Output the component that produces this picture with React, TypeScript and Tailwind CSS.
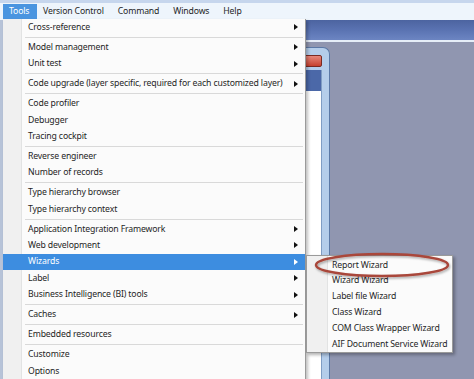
import React from "react";

const F = { fontFamily: '"Noto Sans", "Open Sans", sans-serif' };

type Item = { t: string; arrow?: boolean; hl?: boolean } | "sep";

const items: Item[] = [
  { t: "Cross-reference", arrow: true },
  "sep",
  { t: "Model management", arrow: true },
  { t: "Unit test", arrow: true },
  "sep",
  { t: "Code upgrade (layer specific, required for each customized layer)", arrow: true },
  "sep",
  { t: "Code profiler" },
  { t: "Debugger" },
  { t: "Tracing cockpit" },
  "sep",
  { t: "Reverse engineer" },
  { t: "Number of records" },
  "sep",
  { t: "Type hierarchy browser" },
  { t: "Type hierarchy context" },
  "sep",
  { t: "Application Integration Framework", arrow: true },
  { t: "Web development", arrow: true },
  { t: "Wizards", arrow: true, hl: true },
  { t: "Label", arrow: true },
  { t: "Business Intelligence (BI) tools", arrow: true },
  "sep",
  { t: "Caches", arrow: true },
  "sep",
  { t: "Embedded resources" },
  "sep",
  { t: "Customize" },
  { t: "Options" },
];

const sub = [
  "Report Wizard",
  "Wizard Wizard",
  "Label file Wizard",
  "Class Wizard",
  "COM Class Wrapper Wizard",
  "AIF Document Service Wizard",
];

function Arrow({ white }: { white?: boolean }) {
  return (
    <svg width="4" height="6" viewBox="0 0 4 6" className="shrink-0">
      <path d="M0 0 L4 3 L0 6 Z" fill={white ? "#ffffff" : "#111111"} />
    </svg>
  );
}

export default function App() {
  return (
    <div className="relative w-[474px] h-[379px] overflow-hidden bg-[#9096b0] flex flex-col text-[#1f1f1f] tracking-[-0.15px]" style={F}>
      <div className="h-[3px] bg-[#c6d6ed] shrink-0" />
      <div className="h-[17px] bg-[#eef5fc] shrink-0 flex items-center text-[8.7px] pl-[3px]">
        <div className="h-[15px] bg-[#4a95e0] text-white flex items-center pl-[6px] w-[34px]">Tools</div>
        <span className="ml-[6px]">Version Control</span>
        <span className="ml-[14px]">Command</span>
        <span className="ml-[14px]">Windows</span>
        <span className="ml-[14px]">Help</span>
      </div>
      <div className="flex flex-1 min-h-0">
        <div className="w-[3px] bg-[#b7c3d8] shrink-0" />
        <div className="flex-1 flex flex-col">
          <div className="h-[20px] bg-gradient-to-b from-[#4c64a0] via-[#5a73b2] to-[#6c85c2] shrink-0" />
          <div className="h-[2px] bg-[#e6eef8] shrink-0" />
          <div className="flex-1 flex pt-[5px]">
            <div className="w-[327px] flex flex-col rounded-tr-[7px] border-r border-t border-[#5c79a6] bg-[#b4cdea]">
              <div className="h-[22px] flex items-center justify-end pr-[7px] pt-[3px]">
                <div className="w-[40px] h-[12px] rounded-[2px] bg-gradient-to-b from-[#e6867a] to-[#c6402e] border border-[#7a2a22]" />
              </div>
              <div className="flex-1 mr-[7px] flex flex-col border-r border-[#7f9dc4]">
                <div className="h-[21px] bg-[#4b68a8]" />
                <div className="flex-1 bg-white" />
              </div>
            </div>
          </div>
        </div>
      </div>

      {/* Dropdown menu */}
      <div className="absolute left-[3px] top-[19px] w-[303px] h-[370px] bg-[#fbfbfb] border-r border-[#9a9a9a] shadow-[2px_2px_3px_rgba(0,0,0,0.25)] flex flex-col text-[8.7px]">
        <div className="absolute left-0 top-0 bottom-0 w-[19px] bg-[#f0f0f0] border-r border-[#e2e3e3]" />
        {items.map((it, i) =>
          it === "sep" ? (
            <div key={i} className="h-[3.6px] flex flex-col justify-center pl-[22px] pr-[2px] relative">
              <div className="h-px bg-[#d9d9d9]" />
            </div>
          ) : (
            <div
              key={i}
              className={
                "h-[16.4px] flex items-center justify-between pl-[25px] pr-[7px] relative " +
                (it.hl ? "bg-[#3d8de0] text-white" : "")
              }
            >
              <span className="leading-none whitespace-nowrap">{it.t}</span>
              {it.arrow && <Arrow white={it.hl} />}
            </div>
          )
        )}
      </div>

      {/* Submenu */}
      <div className="absolute left-[306px] top-[255px] w-[147px] h-[98px] bg-[#fbfbfb] border border-[#9a9a9a] shadow-[2px_2px_3px_rgba(0,0,0,0.3)] flex flex-col pt-[1px] text-[8.7px]">
        <div className="absolute left-0 top-0 bottom-0 w-[21px] bg-[#f0f0f0] border-r border-[#e2e3e3]" />
        {sub.map((s) => (
          <div key={s} className="h-[16px] flex items-center pl-[25px] relative">
            <span className="leading-none whitespace-nowrap">{s}</span>
          </div>
        ))}
      </div>

      {/* Red ellipse annotation */}
      <svg className="absolute left-[310px] top-[249px]" width="144" height="34" viewBox="0 0 144 34">
        <defs>
          <filter id="sh" x="-10%" y="-30%" width="120%" height="160%">
            <feDropShadow dx="1" dy="1.5" stdDeviation="1" floodColor="#000" floodOpacity="0.35" />
          </filter>
        </defs>
        <ellipse cx="72" cy="16" rx="66" ry="11" fill="none" stroke="#a9473b" strokeWidth="2.5" filter="url(#sh)" />
      </svg>
    </div>
  );
}
